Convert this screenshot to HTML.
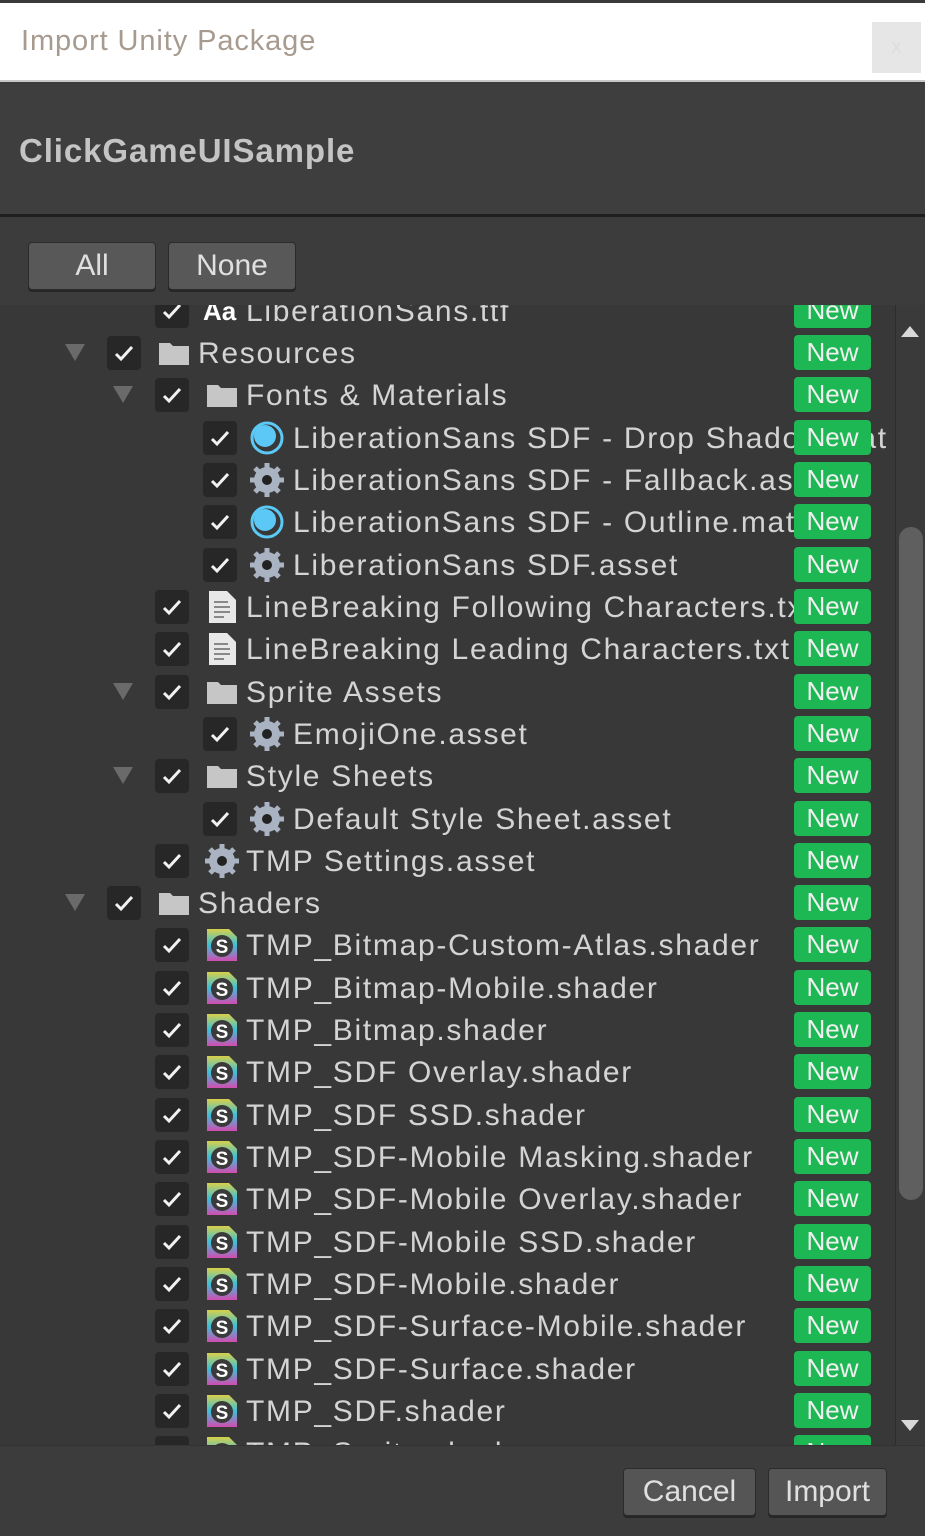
<!DOCTYPE html>
<html><head><meta charset="utf-8">
<style>
*{margin:0;padding:0;box-sizing:border-box}
body{width:925px;height:1536px;background:#3c3c3c;font-family:"Liberation Sans",sans-serif;position:relative;overflow:hidden}
.top{position:absolute;left:0;top:0;width:925px;height:3px;background:#3a3a3a}
.title{position:absolute;left:0;top:3px;width:925px;height:79px;background:#fff;border-bottom:2px solid #c8c8c8}
.title span{position:absolute;left:21px;top:22px;font-size:29px;color:#a79a8e;letter-spacing:0.9px}
.xbtn{position:absolute;left:872px;top:19px;width:49px;height:51px;background:#e6e6e6;color:#ddd;font-size:20px;text-align:center;line-height:51px}
.head{position:absolute;left:0;top:84px;width:925px;height:133px;background:#3e3e3e;border-bottom:3px solid #1f1f1f}
.head span{position:absolute;left:19px;top:48px;font-size:33px;font-weight:bold;color:#c4c4c4;letter-spacing:0.9px}
.btn{position:absolute;height:48px;background:#585858;border:1px solid #2b2b2b;border-radius:4px;color:#e0e0e0;font-size:30px;text-align:center;line-height:46px;box-shadow:0 2px 0 #262626}
.list{position:absolute;left:0;top:305px;width:895px;height:1140px;background:#383838;overflow:hidden}
.sb{position:absolute;left:895px;top:305px;width:30px;height:1140px;background:#3a3a3a;border-left:1px solid #2c2c2c}
.thumb{position:absolute;left:3px;top:222px;width:24px;height:673px;background:#5f5f5f;border-radius:12px}
.foot{position:absolute;left:0;top:1445px;width:925px;height:91px;background:#3c3c3c;border-top:1px solid #333}
.r{position:absolute;left:0;width:895px;height:42px}
.tri{position:absolute;top:12px;width:0;height:0;border-left:10px solid transparent;border-right:10px solid transparent;border-top:17px solid #6a6a6a}
.cb{position:absolute;top:4px;width:34px;height:34px;background:#272727;border-radius:4px}
.cb svg{position:absolute;left:7px;top:8px}
.ic{position:absolute;top:4px;width:34px;height:34px}
.t{position:absolute;top:5px;font-size:30px;color:#d4d4d4;white-space:nowrap;letter-spacing:1.7px}
.nw{position:absolute;left:794px;top:3px;width:77px;height:35px;background:#1db853;border-radius:4px;color:#f0f0f0;font-size:26px;text-align:center;line-height:34px}
.L1 .tri{left:65px}.L1 .cb{left:107px}.L1 .ic{left:157px}.L1 .t{left:198px}
.L2 .tri{left:113px}.L2 .cb{left:155px}.L2 .ic{left:205px}.L2 .t{left:246px}
.L3 .cb{left:203px}.L3 .ic{left:250px}.L3 .t{left:293px}
</style></head><body>
<svg width="0" height="0" style="position:absolute">
<defs>
<symbol id="ck" viewBox="0 0 20 18"><path d="M2 10 L7 15 L18 3" fill="none" stroke="#f2f2f2" stroke-width="3"/></symbol>
<symbol id="fd" viewBox="0 0 34 34"><path d="M2 7 H13 L16 10 H32 V29 H2 Z" fill="#c6c6c6"/></symbol>
<symbol id="mt" viewBox="0 0 34 34"><circle cx="17" cy="17" r="15" fill="none" stroke="#5bc8f5" stroke-width="3"/><circle cx="15" cy="15" r="11" fill="#5bc8f5"/></symbol>
<symbol id="gr" viewBox="0 0 34 34"><g fill="#aab3c2"><circle cx="17" cy="17" r="13"/><g stroke="#aab3c2" stroke-width="5"><path d="M17 0V34M0 17H34M5 5L29 29M29 5L5 29"/></g></g><circle cx="17" cy="17" r="5" fill="#222"/></symbol>
<symbol id="dc" viewBox="0 0 34 34"><path d="M4 1 H22 L31 10 V33 H4 Z" fill="#e8e8e8"/><path d="M9 12H23M9 17H25M9 22H25M9 27H19" stroke="#888" stroke-width="2"/></symbol>
<symbol id="sh" viewBox="0 0 34 34"><defs><linearGradient id="g" x1="0" y1="0" x2="0" y2="1"><stop offset="0" stop-color="#d8d04a"/><stop offset=".5" stop-color="#3cc0d8"/><stop offset="1" stop-color="#d24cb0"/></linearGradient></defs><path d="M2 1 H24 L32 9 V33 H2 Z" fill="url(#g)"/><circle cx="17" cy="18" r="11" fill="#3a3a3a"/><text x="17" y="25" font-family="Liberation Sans" font-weight="bold" font-size="19" fill="#fff" text-anchor="middle">S</text></symbol>
</defs></svg>
<div class="top"></div>
<div class="title"><span>Import Unity Package</span><div class="xbtn">x</div></div>
<div class="head"><span>ClickGameUISample</span></div>
<div class="btn" style="left:28px;top:242px;width:128px">All</div>
<div class="btn" style="left:168px;top:242px;width:128px">None</div>
<div class="list">
<div class="r L2" style="top:-15px"><div class="cb"><svg width="20" height="18"><use href="#ck"/></svg></div><div class="ic" style="color:#fff;font-weight:bold;font-size:26px;top:6px;left:203px">Aa</div><div class="t">LiberationSans.ttf</div><div class="nw">New</div></div>
<div class="r L1" style="top:27px"><div class="tri"></div><div class="cb"><svg width="20" height="18"><use href="#ck"/></svg></div><svg class="ic"><use href="#fd"/></svg><div class="t">Resources</div><div class="nw">New</div></div>
<div class="r L2" style="top:69px"><div class="tri"></div><div class="cb"><svg width="20" height="18"><use href="#ck"/></svg></div><svg class="ic"><use href="#fd"/></svg><div class="t">Fonts &amp; Materials</div><div class="nw">New</div></div>
<div class="r L3" style="top:112px"><div class="cb"><svg width="20" height="18"><use href="#ck"/></svg></div><svg class="ic"><use href="#mt"/></svg><div class="t">LiberationSans SDF - Drop Shadow.mat</div><div class="nw">New</div></div>
<div class="r L3" style="top:154px"><div class="cb"><svg width="20" height="18"><use href="#ck"/></svg></div><svg class="ic"><use href="#gr"/></svg><div class="t">LiberationSans SDF - Fallback.asset</div><div class="nw">New</div></div>
<div class="r L3" style="top:196px"><div class="cb"><svg width="20" height="18"><use href="#ck"/></svg></div><svg class="ic"><use href="#mt"/></svg><div class="t">LiberationSans SDF - Outline.mat</div><div class="nw">New</div></div>
<div class="r L3" style="top:239px"><div class="cb"><svg width="20" height="18"><use href="#ck"/></svg></div><svg class="ic"><use href="#gr"/></svg><div class="t">LiberationSans SDF.asset</div><div class="nw">New</div></div>
<div class="r L2" style="top:281px"><div class="cb"><svg width="20" height="18"><use href="#ck"/></svg></div><svg class="ic"><use href="#dc"/></svg><div class="t">LineBreaking Following Characters.txt</div><div class="nw">New</div></div>
<div class="r L2" style="top:323px"><div class="cb"><svg width="20" height="18"><use href="#ck"/></svg></div><svg class="ic"><use href="#dc"/></svg><div class="t">LineBreaking Leading Characters.txt</div><div class="nw">New</div></div>
<div class="r L2" style="top:366px"><div class="tri"></div><div class="cb"><svg width="20" height="18"><use href="#ck"/></svg></div><svg class="ic"><use href="#fd"/></svg><div class="t">Sprite Assets</div><div class="nw">New</div></div>
<div class="r L3" style="top:408px"><div class="cb"><svg width="20" height="18"><use href="#ck"/></svg></div><svg class="ic"><use href="#gr"/></svg><div class="t">EmojiOne.asset</div><div class="nw">New</div></div>
<div class="r L2" style="top:450px"><div class="tri"></div><div class="cb"><svg width="20" height="18"><use href="#ck"/></svg></div><svg class="ic"><use href="#fd"/></svg><div class="t">Style Sheets</div><div class="nw">New</div></div>
<div class="r L3" style="top:493px"><div class="cb"><svg width="20" height="18"><use href="#ck"/></svg></div><svg class="ic"><use href="#gr"/></svg><div class="t">Default Style Sheet.asset</div><div class="nw">New</div></div>
<div class="r L2" style="top:535px"><div class="cb"><svg width="20" height="18"><use href="#ck"/></svg></div><svg class="ic"><use href="#gr"/></svg><div class="t">TMP Settings.asset</div><div class="nw">New</div></div>
<div class="r L1" style="top:577px"><div class="tri"></div><div class="cb"><svg width="20" height="18"><use href="#ck"/></svg></div><svg class="ic"><use href="#fd"/></svg><div class="t">Shaders</div><div class="nw">New</div></div>
<div class="r L2" style="top:619px"><div class="cb"><svg width="20" height="18"><use href="#ck"/></svg></div><svg class="ic"><use href="#sh"/></svg><div class="t">TMP_Bitmap-Custom-Atlas.shader</div><div class="nw">New</div></div>
<div class="r L2" style="top:662px"><div class="cb"><svg width="20" height="18"><use href="#ck"/></svg></div><svg class="ic"><use href="#sh"/></svg><div class="t">TMP_Bitmap-Mobile.shader</div><div class="nw">New</div></div>
<div class="r L2" style="top:704px"><div class="cb"><svg width="20" height="18"><use href="#ck"/></svg></div><svg class="ic"><use href="#sh"/></svg><div class="t">TMP_Bitmap.shader</div><div class="nw">New</div></div>
<div class="r L2" style="top:746px"><div class="cb"><svg width="20" height="18"><use href="#ck"/></svg></div><svg class="ic"><use href="#sh"/></svg><div class="t">TMP_SDF Overlay.shader</div><div class="nw">New</div></div>
<div class="r L2" style="top:789px"><div class="cb"><svg width="20" height="18"><use href="#ck"/></svg></div><svg class="ic"><use href="#sh"/></svg><div class="t">TMP_SDF SSD.shader</div><div class="nw">New</div></div>
<div class="r L2" style="top:831px"><div class="cb"><svg width="20" height="18"><use href="#ck"/></svg></div><svg class="ic"><use href="#sh"/></svg><div class="t">TMP_SDF-Mobile Masking.shader</div><div class="nw">New</div></div>
<div class="r L2" style="top:873px"><div class="cb"><svg width="20" height="18"><use href="#ck"/></svg></div><svg class="ic"><use href="#sh"/></svg><div class="t">TMP_SDF-Mobile Overlay.shader</div><div class="nw">New</div></div>
<div class="r L2" style="top:916px"><div class="cb"><svg width="20" height="18"><use href="#ck"/></svg></div><svg class="ic"><use href="#sh"/></svg><div class="t">TMP_SDF-Mobile SSD.shader</div><div class="nw">New</div></div>
<div class="r L2" style="top:958px"><div class="cb"><svg width="20" height="18"><use href="#ck"/></svg></div><svg class="ic"><use href="#sh"/></svg><div class="t">TMP_SDF-Mobile.shader</div><div class="nw">New</div></div>
<div class="r L2" style="top:1000px"><div class="cb"><svg width="20" height="18"><use href="#ck"/></svg></div><svg class="ic"><use href="#sh"/></svg><div class="t">TMP_SDF-Surface-Mobile.shader</div><div class="nw">New</div></div>
<div class="r L2" style="top:1043px"><div class="cb"><svg width="20" height="18"><use href="#ck"/></svg></div><svg class="ic"><use href="#sh"/></svg><div class="t">TMP_SDF-Surface.shader</div><div class="nw">New</div></div>
<div class="r L2" style="top:1085px"><div class="cb"><svg width="20" height="18"><use href="#ck"/></svg></div><svg class="ic"><use href="#sh"/></svg><div class="t">TMP_SDF.shader</div><div class="nw">New</div></div>
<div class="r L2" style="top:1127px"><div class="cb"><svg width="20" height="18"><use href="#ck"/></svg></div><svg class="ic"><use href="#sh"/></svg><div class="t">TMP_Sprite.shader</div><div class="nw">New</div></div>
</div>
<div class="sb"><div style="position:absolute;left:5px;top:21px;border-left:9px solid transparent;border-right:9px solid transparent;border-bottom:11px solid #d8d8d8"></div><div class="thumb"></div><div style="position:absolute;left:5px;top:1115px;border-left:9px solid transparent;border-right:9px solid transparent;border-top:11px solid #d8d8d8"></div></div>
<div class="foot"></div>
<div class="btn" style="left:623px;top:1468px;width:133px;background:#555">Cancel</div>
<div class="btn" style="left:768px;top:1468px;width:119px;background:#555">Import</div>
</body></html>
